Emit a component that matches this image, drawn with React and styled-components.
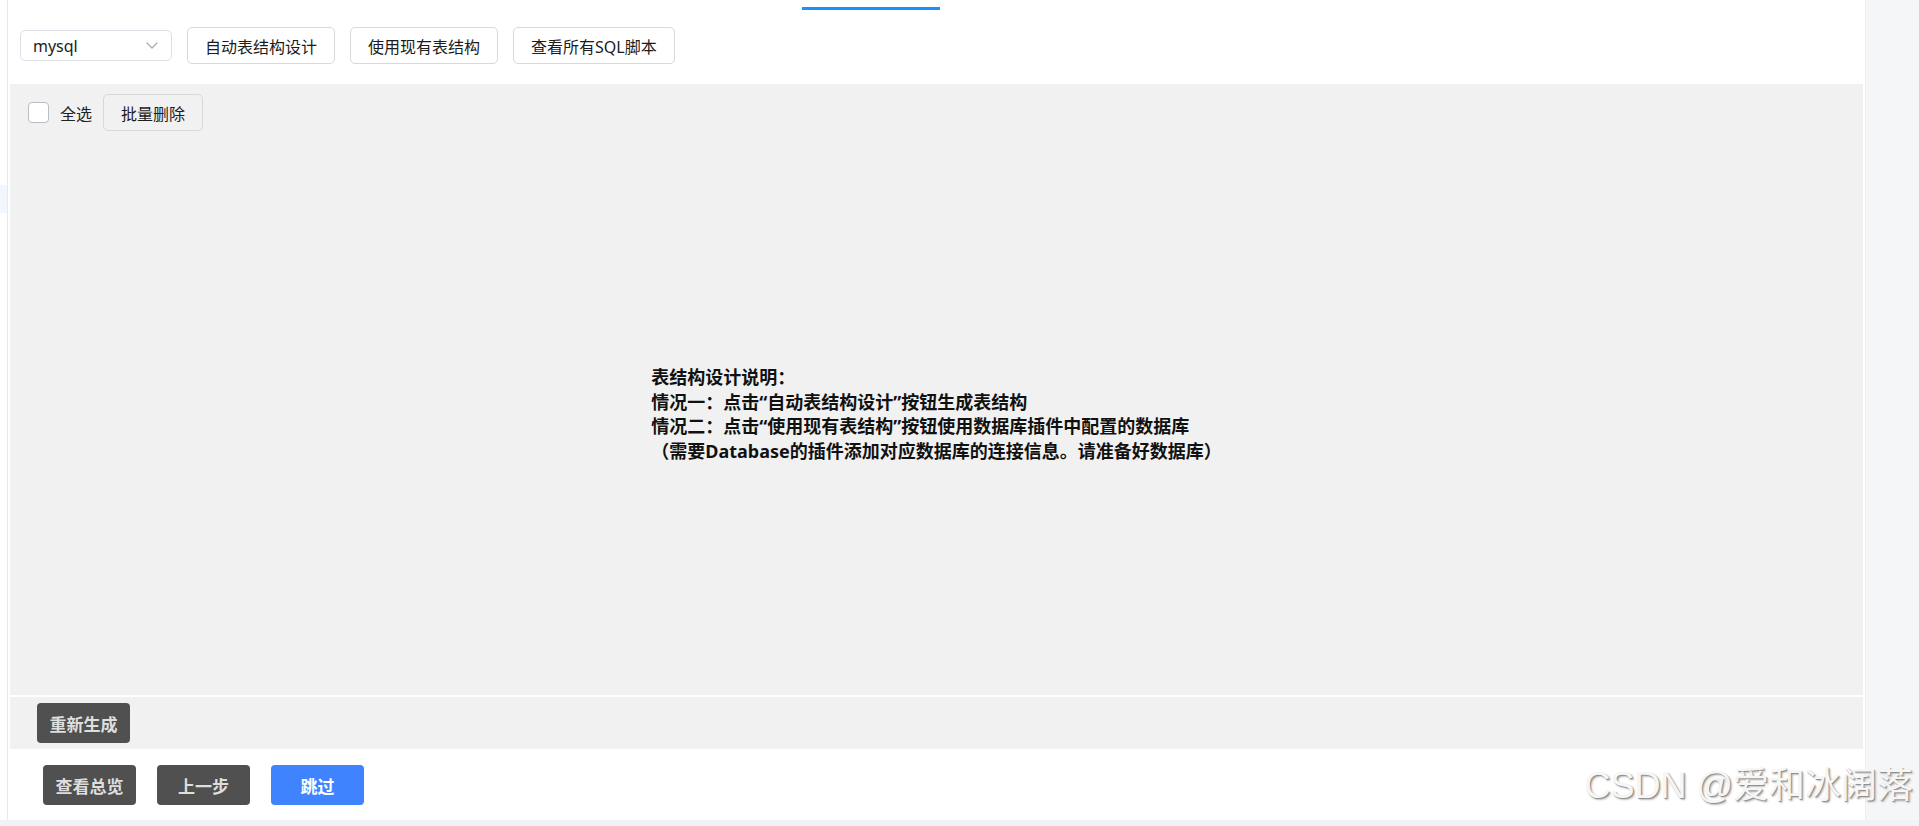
import styled, { createGlobalStyle } from "styled-components";

const GlobalStyle = createGlobalStyle`
  html, body {
    margin: 0;
    padding: 0;
    background: #ffffff;
  }
  body {
    font-family: "Noto Sans", "Noto Sans CJK SC", sans-serif;
    color: #333;
  }
  * {
    box-sizing: border-box;
  }
`;

const Page = styled.div`
  width: 100%;
  height: 826px;
  display: flex;
  flex-direction: column;
  position: relative;
  overflow: hidden;
`;

const Body = styled.div`
  height: 820px;
  display: flex;
`;

const LeftStrip = styled.div`
  width: 8px;
  background: #ffffff;
  border-right: 1px solid #e7e9ed;
  padding-top: 185px;
`;

const StripMark = styled.div`
  height: 28px;
  background: #f2f6fd;
`;

const Main = styled.div`
  flex: 1;
  display: flex;
  flex-direction: column;
  background: #ffffff;
`;

const TopBar = styled.div`
  height: 84px;
  position: relative;
  padding: 27px 0 0 12px;
`;

const InkBar = styled.div`
  position: absolute;
  left: 794px;
  top: 7px;
  width: 138px;
  height: 3px;
  background: #1890ff;
`;

const Toolbar = styled.div`
  display: flex;
  align-items: center;
  gap: 15px;
  height: 37px;
`;

const Select = styled.div`
  width: 152px;
  height: 31px;
  border: 1px solid #dcdfe6;
  border-radius: 5px;
  display: flex;
  align-items: center;
  justify-content: space-between;
  padding: 0 13px 0 12px;
  font-size: 16px;
  color: #222;
  background: #fff;
`;

const Button = styled.button`
  height: 37px;
  padding: 0 17px;
  border: 1px solid #d6d8dd;
  border-radius: 5px;
  background: ${(p) => (p.$ghost ? "transparent" : "#ffffff")};
  font-family: inherit;
  font-size: 16px;
  color: #1c1c1c;
  cursor: pointer;
  white-space: nowrap;
`;

const Content = styled.div`
  flex: 1;
  margin: 0 2px;
  background: #f1f1f1;
  display: flex;
  flex-direction: column;
`;

const CheckRow = styled.div`
  display: flex;
  align-items: center;
  padding: 10px 18px 0;
`;

const CheckBox = styled.span`
  width: 21px;
  height: 21px;
  border: 1px solid #b9bdc5;
  border-radius: 4px;
  background: #ffffff;
`;

const CheckLabel = styled.span`
  font-size: 16px;
  color: #222;
  margin: 0 11px;
`;

const NoticeArea = styled.div`
  flex: 1;
  display: flex;
  align-items: center;
  justify-content: center;
`;

const Notice = styled.div`
  font-size: 18px;
  font-weight: 700;
  line-height: 24.5px;
  color: #111;
  white-space: nowrap;
  margin-top: 2px;
`;

const FooterBar = styled.div`
  height: 52px;
  margin: 2px 2px 0;
  background: #f1f1f1;
  display: flex;
  align-items: center;
  padding-left: 27px;
`;

const ActionBar = styled.div`
  height: 71px;
  display: flex;
  align-items: flex-start;
  gap: 21px;
  padding: 16px 0 0 35px;
`;

const SolidButton = styled.button`
  width: 93px;
  height: 40px;
  border: none;
  border-radius: 4px;
  background: ${(p) => (p.$primary ? "#3f83ff" : "#505050")};
  color: ${(p) => (p.$primary ? "#ffffff" : "#dedede")};
  font-family: inherit;
  font-size: 17px;
  font-weight: 700;
  cursor: pointer;
`;

const RightPanel = styled.div`
  width: 54px;
  background: #f5f6f8;
  border-left: 1px solid #eceef2;
`;

const BottomStrip = styled.div`
  height: 6px;
  background: #f0f2f5;
`;

const Watermark = styled.div`
  position: absolute;
  right: 6px;
  bottom: 18px;
  font-family: "Liberation Sans", "Noto Sans CJK SC", sans-serif;
  font-size: 36px;
  color: #f6f6f6;
  text-shadow: 1px 1px 1px #8a8a8a, 2px 2px 2px #c4c4c4;
  white-space: nowrap;
  pointer-events: none;
`;

const Chevron = () => (
  <svg width="12" height="7" viewBox="0 0 12 7" fill="none">
    <path d="M1 1l5 5 5-5" stroke="#a8abb2" strokeWidth="1.2" strokeLinecap="round" strokeLinejoin="round" />
  </svg>
);

const App = () => {
  return (
    <Page>
      <GlobalStyle />
      <Body>
        <LeftStrip>
          <StripMark />
        </LeftStrip>
        <Main>
          <TopBar>
            <InkBar />
            <Toolbar>
              <Select>
                <span>mysql</span>
                <Chevron />
              </Select>
              <Button>自动表结构设计</Button>
              <Button>使用现有表结构</Button>
              <Button>查看所有SQL脚本</Button>
            </Toolbar>
          </TopBar>
          <Content>
            <CheckRow>
              <CheckBox />
              <CheckLabel>全选</CheckLabel>
              <Button $ghost>批量删除</Button>
            </CheckRow>
            <NoticeArea>
              <Notice>
                表结构设计说明：
                <br />
                情况一：点击“自动表结构设计”按钮生成表结构
                <br />
                情况二：点击“使用现有表结构”按钮使用数据库插件中配置的数据库
                <br />
                （需要Database的插件添加对应数据库的连接信息。请准备好数据库）
              </Notice>
            </NoticeArea>
          </Content>
          <FooterBar>
            <SolidButton>重新生成</SolidButton>
          </FooterBar>
          <ActionBar>
            <SolidButton>查看总览</SolidButton>
            <SolidButton>上一步</SolidButton>
            <SolidButton $primary>跳过</SolidButton>
          </ActionBar>
        </Main>
        <RightPanel />
      </Body>
      <BottomStrip />
      <Watermark>CSDN @爱和冰阔落</Watermark>
    </Page>
  );
};

export default App;
